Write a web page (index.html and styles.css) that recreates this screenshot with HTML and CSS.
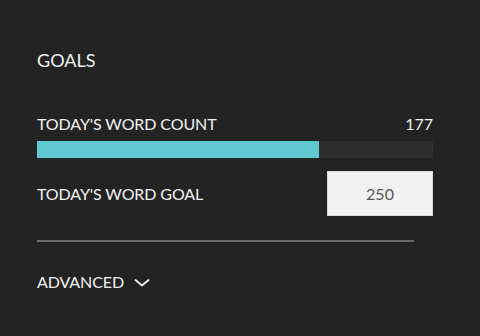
FILE: index.html
```html
<!DOCTYPE html>
<html lang="en">
<head>
    <meta charset="UTF-8">
    <title>Goals</title>
    <link rel="stylesheet" href="styles.css">
</head>
<body>
    <div class="panel">
        <h2 class="title">GOALS</h2>
        <div class="row">
            <span class="label">TODAY'S WORD COUNT</span>
            <span class="count">177</span>
        </div>
        <div class="bar"><div class="fill" style="width:71.2%"></div></div>
        <div class="row goal">
            <span class="label">TODAY'S WORD GOAL</span>
            <input class="goalInput" type="text" value="250">
        </div>
        <hr class="sep">
        <div class="advanced">
            <span class="label">ADVANCED</span>
            <svg class="chev" width="16" height="10" viewBox="0 0 16 10">
                <path d="M1.5 2 L8 7.5 L14.5 2" fill="none" stroke="#eee" stroke-width="1.8" stroke-linecap="round" stroke-linejoin="round"/>
            </svg>
        </div>
    </div>
</body>
</html>
```

FILE: styles.css
```css
* { margin: 0; padding: 0; box-sizing: border-box; }

body {
    background: #232323;
    font-family: Lato, "Open Sans", sans-serif;
    color: #f2f2f2;
}

.panel { width: 480px; height: 336px; padding: 48px 47px 0 37px; }

.title { font-size: 18px; font-weight: 400; line-height: 24px; }

.row {
    display: flex; justify-content: space-between; align-items: center;
    margin-top: 42px; line-height: 20px;
}
.label { font-size: 16px; letter-spacing: -0.1px; }
.count { font-size: 16px; }

.bar { margin-top: 7px; height: 17px; background: #2e2e2e; }
.fill { height: 100%; background: #5fc8d0; }

.row.goal { margin-top: 13px; }
.goalInput {
    width: 106px; height: 45px;
    background: #f2f2f2; border: 1px solid #dadada;
    font-family: Lato, sans-serif; font-size: 16px; color: #555;
    text-align: center; outline: none;
}

.sep {
    margin-top: 24px; width: 377px;
    border: none; height: 2px; background: #6a6a6a;
}

.advanced { display: flex; align-items: center; gap: 10px; margin-top: 30px; line-height: 20px; }
.chev { margin-top: 1px; }
```
